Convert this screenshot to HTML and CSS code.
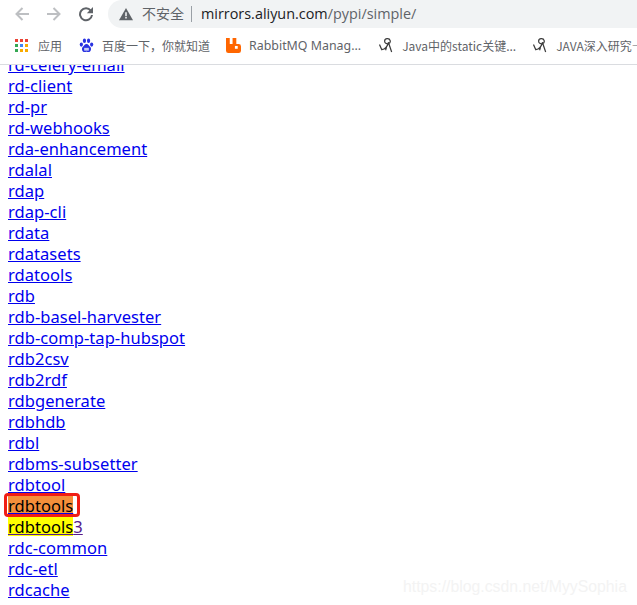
FILE: index.html
```html
<!DOCTYPE html>
<html lang="zh">
<head>
<meta charset="utf-8">
<title>Simple index</title>
<link rel="stylesheet" href="styles.css">
</head>
<body>
<div class="browser">
  <header class="chrome">
    <div class="toolbar">
      <svg class="nav" viewBox="0 0 16 16"><path d="M15 8H2.500M8.500 2 2.500 8l6 6" fill="none" stroke="#bdbfc2" stroke-width="2"/></svg>
      <svg class="nav" viewBox="0 0 16 16"><path d="M1 8h12.500M7.500 2l6 6-6 6" fill="none" stroke="#bdbfc2" stroke-width="2"/></svg>
      <svg class="nav" viewBox="0 0 16 16"><path d="M12.800 4.600A6 6 0 1 0 14 9" fill="none" stroke="#5f6368" stroke-width="2"/><path d="M15 1v6.200H8.800z" fill="#5f6368"/></svg>
      <div class="omnibox">
        <svg class="warn" viewBox="0 0 16 16"><path d="M8 1 16 15H0z" fill="#5f6368"/><path d="M7.100 6h1.800v4.600H7.100zM7.100 11.400h1.800v1.800H7.100z" fill="#f1f3f4"/></svg>
        <span class="insecure">不安全</span>
        <span class="sep"></span>
        <span class="url"><span class="host">mirrors.aliyun.com</span>/pypi/simple/</span>
      </div>
    </div>
    <div class="bookmarks">
      <span class="bm bm-apps">
        <svg class="apps" viewBox="0 0 13 13">
          <rect x="0" y="0" width="3" height="3" fill="#ea4335"/><rect x="5" y="0" width="3" height="3" fill="#ea4335"/><rect x="10" y="0" width="3" height="3" fill="#ea4335"/>
          <rect x="0" y="5" width="3" height="3" fill="#34a853"/><rect x="5" y="5" width="3" height="3" fill="#4285f4"/><rect x="10" y="5" width="3" height="3" fill="#f9ab00"/>
          <rect x="0" y="10" width="3" height="3" fill="#34a853"/><rect x="5" y="10" width="3" height="3" fill="#f9ab00"/><rect x="10" y="10" width="3" height="3" fill="#f9ab00"/>
        </svg>
        应用
      </span>
      <span class="bm bm-baidu">
        <svg class="fav" viewBox="0 0 16 16"><g fill="#2932e1"><ellipse cx="2.500" cy="7" rx="1.700" ry="2.200"/><ellipse cx="5.800" cy="3" rx="1.700" ry="2.400"/><ellipse cx="10.200" cy="3" rx="1.700" ry="2.400"/><ellipse cx="13.500" cy="7" rx="1.700" ry="2.200"/><path d="M8 6.500c2 0 2.500 2 4 3s1 5.500-2 5.500c-1 0-1.200-.4-2-.4s-1 .4-2 .4c-3 0-3.500-4.500-2-5.500S6 6.500 8 6.500z"/></g><path d="M5.500 10.500h5v3h-5z" fill="#c8ccf6"/></svg>
        百度一下，你就知道
      </span>
      <span class="bm bm-rabbit">
        <svg class="fav" viewBox="0 0 16 16"><path d="M0 0h4v6.500h3V0h4v6.500h2.500A2.500 2.500 0 0 1 16 9v4.500a2.500 2.500 0 0 1-2.500 2.500H2.500A2.500 2.500 0 0 1 0 13.500z" fill="#f60"/><rect x="9.500" y="8.500" width="3" height="3" fill="#fff"/></svg>
        <span class="bm-wide">RabbitMQ Manag...</span>
      </span>
      <span class="bm bm-java">
        <svg class="fav" viewBox="0 0 16 16"><path d="M.5 7 3 12.500c3-.5 6-3.500 7-7.500M6 3.500a3 2.700 0 1 1 4 2.500C8 6.500 6 5.500 6 3.500zM10 4.500 13.500 15M8 10l-1 3" fill="none" stroke="#3c3c3c" stroke-width="1.300"/></svg>
        Java中的static关键...
      </span>
      <span class="bm bm-java2">
        <svg class="fav" viewBox="0 0 16 16"><path d="M.5 7 3 12.500c3-.5 6-3.500 7-7.500M6 3.500a3 2.700 0 1 1 4 2.500C8 6.500 6 5.500 6 3.500zM10 4.500 13.500 15M8 10l-1 3" fill="none" stroke="#3c3c3c" stroke-width="1.300"/></svg>
        JAVA深入研究—
      </span>
    </div>
  </header>
  <main class="page">
    <div class="list">
      <a href="#">rd-celery-email</a>
      <a href="#">rd-client</a>
      <a href="#">rd-pr</a>
      <a href="#">rd-webhooks</a>
      <a href="#">rda-enhancement</a>
      <a href="#">rdalal</a>
      <a href="#">rdap</a>
      <a href="#">rdap-cli</a>
      <a href="#">rdata</a>
      <a href="#">rdatasets</a>
      <a href="#">rdatools</a>
      <a href="#">rdb</a>
      <a href="#">rdb-basel-harvester</a>
      <a href="#">rdb-comp-tap-hubspot</a>
      <a href="#">rdb2csv</a>
      <a href="#">rdb2rdf</a>
      <a href="#">rdbgenerate</a>
      <a href="#">rdbhdb</a>
      <a href="#">rdbl</a>
      <a href="#">rdbms-subsetter</a>
      <a href="#">rdbtool</a>
      <a href="#" class="current"><mark class="hit-on">rdbtools</mark></a>
      <a href="#" class="visited"><mark class="hit">rdbtools</mark>3</a>
      <a href="#">rdc-common</a>
      <a href="#">rdc-etl</a>
      <a href="#">rdcache</a>
      <a href="#">rdcc</a>
    </div>
    <span class="watermark">https://blog.csdn.net/MyySophia</span>
  </main>
</div>
</body>
</html>
```
FILE: styles.css
```css
* { box-sizing: border-box; }
html, body { margin: 0; padding: 0; background: #fff; }
.browser { width: 637px; height: 605px; overflow: hidden; display: flex; flex-direction: column; }
.chrome { height: 65px; flex: none; border-bottom: 1px solid #dadce0; font-family: "Noto Sans CJK SC", "Noto Sans", sans-serif; }
.toolbar { height: 28px; display: flex; align-items: center; padding-left: 14px; gap: 16px; }
.nav { width: 16px; height: 16px; flex: none; }
.omnibox { flex: 1; height: 28px; margin-left: -2px; background: #f1f3f4; border-radius: 14px 0 0 14px; display: flex; align-items: center; padding-left: 11px; font-size: 14px; color: #5f6368; }
.warn { width: 14px; height: 14px; flex: none; }
.insecure { margin-left: 9px; margin-bottom: 2px; }
.sep { width: 1px; height: 16px; background: #9aa0a6; margin: 0 9px 0 7px; }
.url { font-family: "Open Sans", sans-serif; font-size: 14.4px; margin-bottom: 2px; }
.host { color: #202124; }
.bookmarks { height: 36px; display: flex; align-items: center; padding: 0 0 2px 15px; font-size: 12px; color: #5f6368; white-space: nowrap; }
.bm { display: flex; align-items: center; flex: none; }
.apps { width: 13px; height: 13px; margin-right: 10px; }
.fav { width: 15px; height: 15px; margin-right: 8px; }
.bm-baidu { margin-left: 17px; }
.bm-rabbit { margin-left: 16px; }
.bm-wide { font-family: "Noto Sans", sans-serif; font-size: 12.400px; }
.bm-java { margin-left: 18px; }
.bm-java2 { margin-left: 17px; }
.page { position: relative; flex: 1; overflow: hidden; padding-left: 8px; font-family: "Noto Sans", sans-serif; font-size: 16.500px; letter-spacing: .05px; }
.list { margin-top: -11px; display: flex; flex-direction: column; align-items: flex-start; }
.list a { display: block; height: 21px; line-height: 21px; color: #0000ee; text-decoration: underline; white-space: nowrap; }
.list a.visited { color: #551a8b; }
mark { color: #000; background: none; background-repeat: no-repeat; background-position: 0 2px; background-size: 100% 19px; }
.hit { background-image: linear-gradient(#ffff00, #ffff00); }
.hit-on { background-image: linear-gradient(#f58f3a, #f58f3a); }
.current { position: relative; }
.current::after { content: ""; position: absolute; left: -4px; right: -7px; top: -2px; bottom: -1px; border: 3px solid #f01e14; border-radius: 4px; }
.watermark { position: absolute; left: 403px; top: 513px; font-size: 15.800px; letter-spacing: 0; font-family: "Liberation Sans", sans-serif; color: #f3f3f3; white-space: nowrap; }
```
